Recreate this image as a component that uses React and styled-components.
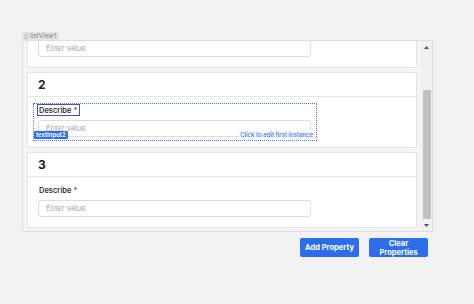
import React, { useLayoutEffect, useRef } from "react";
import styled, { createGlobalStyle } from "styled-components";

const GlobalStyle = createGlobalStyle`
  html, body {
    margin: 0;
    padding: 0;
    background-color: #f2f2f2;
    font-family: Inter, "Noto Sans", "Liberation Sans", sans-serif;
  }
`;

const Page = styled.div`
  width: 474px;
  height: 304px;
  box-sizing: border-box;
  padding: 32px 0 0 22px;
`;

const Tag = styled.div`
  display: flex;
  align-items: center;
  gap: 2px;
  width: fit-content;
  height: 8px;
  padding: 0 3px 0 2px;
  background-color: #e4e4e4;
  color: #888888;
  font-size: 6.5px;
  line-height: 8px;
  border-radius: 1px 1px 0 0;
`;

const ListBox = styled.div`
  position: relative;
  width: 411px;
  height: 192px;
  box-sizing: border-box;
  border: 1px solid #dedede;
  background-color: #f5f5f5;
`;

const Scroller = styled.div`
  height: 100%;
  box-sizing: border-box;
  overflow-y: scroll;
  scrollbar-width: none;
  padding: 4px 15px 3px 4px;
  display: flex;
  flex-direction: column;
  gap: 4px;
`;

const ScrollTrack = styled.div`
  position: absolute;
  top: 0;
  right: 0;
  bottom: 0;
  width: 12px;
  background-color: #f1f1f1;
  display: flex;
  flex-direction: column;
  align-items: center;
`;

const ArrowButton = styled.div`
  flex: none;
  height: 12px;
  width: 12px;
  display: flex;
  align-items: center;
  justify-content: center;
`;

const ThumbArea = styled.div`
  flex: 1;
  width: 100%;
  display: flex;
  flex-direction: column;
  justify-content: flex-end;
  padding-left: 3px;
  padding-right: 1px;
  box-sizing: border-box;
`;

const Thumb = styled.div`
  width: 100%;
  background-color: #c1c1c1;
`;

const Card = styled.div`
  flex: none;
  width: 390px;
  box-sizing: border-box;
  background-color: #ffffff;
  border: 1px solid #e2e2e2;
  border-radius: 2px;
`;

const CardHeader = styled.div`
  height: 23px;
  display: flex;
  align-items: center;
  padding-left: 10px;
  border-bottom: 1px solid #e6e6e6;
  font-size: 12px;
  font-weight: 700;
  color: #1c1c1c;
`;

const CardBody = styled.div`
  height: 50px;
  box-sizing: border-box;
  padding: 7px 0 10px 10px;
`;

const Field = styled.div`
  position: relative;
  width: 273px;
  display: flex;
  flex-direction: column;
  align-items: flex-start;
  gap: 4px;
`;

const Label = styled.div`
  height: 12px;
  box-sizing: border-box;
  margin-left: -1px;
  padding: 0 1px;
  display: flex;
  align-items: center;
  border: 1px solid ${(p) => (p.$selected ? "#3f51c9" : "transparent")};
  font-size: 7.5px;
  font-weight: 600;
  color: #333333;
`;

const Required = styled.span`
  color: #e03131;
  margin-left: 2px;
`;

const Input = styled.input`
  width: 273px;
  height: 17px;
  box-sizing: border-box;
  margin: 0;
  border: 1px solid #dcdcdc;
  border-radius: 3px;
  padding: 0 7px;
  font-family: inherit;
  font-size: 7.5px;
  color: #333;
  background: #fff;
  outline: none;
  &::placeholder {
    color: #a5a5a5;
  }
`;

const Selection = styled.div`
  position: absolute;
  top: -1px;
  left: -5px;
  right: -6px;
  bottom: -4px;
  border: 1px dotted #4f6fe0;
  pointer-events: none;
`;

const WidgetName = styled.div`
  position: absolute;
  left: 0;
  bottom: 1px;
  height: 8px;
  padding: 0 2px;
  background-color: #2e6de9;
  color: #ffffff;
  font-size: 6px;
  font-weight: 600;
  line-height: 8px;
  border-radius: 1px;
`;

const EditHint = styled.div`
  position: absolute;
  right: 2px;
  bottom: 2px;
  padding: 0 1px;
  background-color: rgba(240, 245, 255, 0.95);
  color: #4a78e6;
  font-size: 6px;
  font-weight: 500;
  line-height: 7px;
`;

const Actions = styled.div`
  width: 406px;
  margin-top: 6px;
  display: flex;
  justify-content: flex-end;
  gap: 10px;
`;

const Button = styled.button`
  width: 59px;
  height: 19px;
  box-sizing: border-box;
  border: none;
  border-radius: 2px;
  padding: 0 4px;
  background-color: #2e6de9;
  color: #ffffff;
  font-family: inherit;
  font-size: 7.5px;
  font-weight: 700;
  line-height: 9px;
  cursor: pointer;
`;

function GripIcon() {
  return (
    <svg width="4" height="5" viewBox="0 0 4 5">
      {[0, 2, 4].map((y) =>
        [0.5, 2.5].map((x) => (
          <rect key={`${x}-${y}`} x={x} y={y} width="1" height="1" fill="#9a9a9a" />
        ))
      )}
    </svg>
  );
}

function Arrow({ up }) {
  return (
    <svg width="5" height="3" viewBox="0 0 5 3">
      <polygon points={up ? "0,3 5,3 2.5,0" : "0,0 5,0 2.5,3"} fill="#555" />
    </svg>
  );
}

const items = [1, 2, 3];

function App() {
  const scrollRef = useRef(null);

  useLayoutEffect(() => {
    const el = scrollRef.current;
    if (el) el.scrollTop = el.scrollHeight;
  }, []);

  return (
    <>
      <GlobalStyle />
      <Page>
        <Tag>
          <GripIcon />
          listView1
        </Tag>
        <ListBox>
          <Scroller ref={scrollRef}>
            {items.map((n) => (
              <Card key={n}>
                <CardHeader>{n}</CardHeader>
                <CardBody>
                  <Field>
                    <Label $selected={n === 2}>
                      Describe<Required>*</Required>
                    </Label>
                    <Input placeholder="Enter value" />
                    {n === 2 && (
                      <Selection>
                        <WidgetName>textInput2</WidgetName>
                        <EditHint>Click to edit first instance</EditHint>
                      </Selection>
                    )}
                  </Field>
                </CardBody>
              </Card>
            ))}
          </Scroller>
          <ScrollTrack>
            <ArrowButton>
              <Arrow up />
            </ArrowButton>
            <ThumbArea>
              <Thumb style={{ height: "78%" }} />
            </ThumbArea>
            <ArrowButton>
              <Arrow />
            </ArrowButton>
          </ScrollTrack>
        </ListBox>
        <Actions>
          <Button>Add Property</Button>
          <Button>
            Clear
            <br />
            Properties
          </Button>
        </Actions>
      </Page>
    </>
  );
}

export default App;
